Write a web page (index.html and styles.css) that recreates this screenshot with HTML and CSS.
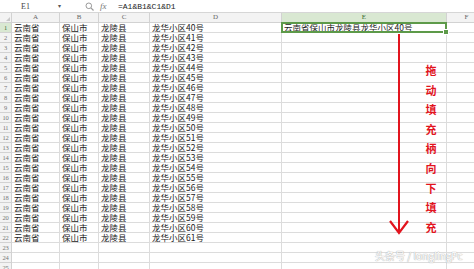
FILE: index.html
```html
<!DOCTYPE html>
<html lang="zh">
<head>
<meta charset="utf-8">
<link rel="stylesheet" href="styles.css">
</head>
<body>
<div class="sheet">
  <div class="formula-bar">
    <div class="name-box"><span>E1</span><span class="drop">▾</span></div>
    <div class="tools">
      <svg class="mag" width="9" height="9" viewBox="0 0 9 9"><circle cx="3.8" cy="3.8" r="2.8" fill="none" stroke="#9a9a9a" stroke-width="1"/><line x1="5.9" y1="5.9" x2="8.5" y2="8.5" stroke="#9a9a9a" stroke-width="1.2"/></svg>
      <span class="fx">fx</span>
    </div>
    <div class="formula">=A1&amp;B1&amp;C1&amp;D1</div>
  </div>
  <div class="grid">
    <div class="row head"><div class="c rh corner"><span class="tri"></span></div><div class="c">A</div><div class="c">B</div><div class="c">C</div><div class="c">D</div><div class="c sel-col">E</div><div class="c">F</div></div>
    <div class="row"><div class="c rh sel-row">1</div><div class="c">云南省</div><div class="c">保山市</div><div class="c">龙陵县</div><div class="c">龙华小区40号</div><div class="c active">云南省保山市龙陵县龙华小区40号<span class="handle"></span></div><div class="c"></div></div>
    <div class="row"><div class="c rh">2</div><div class="c">云南省</div><div class="c">保山市</div><div class="c">龙陵县</div><div class="c">龙华小区41号</div><div class="c"></div><div class="c"></div></div>
    <div class="row"><div class="c rh">3</div><div class="c">云南省</div><div class="c">保山市</div><div class="c">龙陵县</div><div class="c">龙华小区42号</div><div class="c"></div><div class="c"></div></div>
    <div class="row"><div class="c rh">4</div><div class="c">云南省</div><div class="c">保山市</div><div class="c">龙陵县</div><div class="c">龙华小区43号</div><div class="c"></div><div class="c"></div></div>
    <div class="row"><div class="c rh">5</div><div class="c">云南省</div><div class="c">保山市</div><div class="c">龙陵县</div><div class="c">龙华小区44号</div><div class="c"></div><div class="c"></div></div>
    <div class="row"><div class="c rh">6</div><div class="c">云南省</div><div class="c">保山市</div><div class="c">龙陵县</div><div class="c">龙华小区45号</div><div class="c"></div><div class="c"></div></div>
    <div class="row"><div class="c rh">7</div><div class="c">云南省</div><div class="c">保山市</div><div class="c">龙陵县</div><div class="c">龙华小区46号</div><div class="c"></div><div class="c"></div></div>
    <div class="row"><div class="c rh">8</div><div class="c">云南省</div><div class="c">保山市</div><div class="c">龙陵县</div><div class="c">龙华小区47号</div><div class="c"></div><div class="c"></div></div>
    <div class="row"><div class="c rh">9</div><div class="c">云南省</div><div class="c">保山市</div><div class="c">龙陵县</div><div class="c">龙华小区48号</div><div class="c"></div><div class="c"></div></div>
    <div class="row"><div class="c rh">10</div><div class="c">云南省</div><div class="c">保山市</div><div class="c">龙陵县</div><div class="c">龙华小区49号</div><div class="c"></div><div class="c"></div></div>
    <div class="row"><div class="c rh">11</div><div class="c">云南省</div><div class="c">保山市</div><div class="c">龙陵县</div><div class="c">龙华小区50号</div><div class="c"></div><div class="c"></div></div>
    <div class="row"><div class="c rh">12</div><div class="c">云南省</div><div class="c">保山市</div><div class="c">龙陵县</div><div class="c">龙华小区51号</div><div class="c"></div><div class="c"></div></div>
    <div class="row"><div class="c rh">13</div><div class="c">云南省</div><div class="c">保山市</div><div class="c">龙陵县</div><div class="c">龙华小区52号</div><div class="c"></div><div class="c"></div></div>
    <div class="row"><div class="c rh">14</div><div class="c">云南省</div><div class="c">保山市</div><div class="c">龙陵县</div><div class="c">龙华小区53号</div><div class="c"></div><div class="c"></div></div>
    <div class="row"><div class="c rh">15</div><div class="c">云南省</div><div class="c">保山市</div><div class="c">龙陵县</div><div class="c">龙华小区54号</div><div class="c"></div><div class="c"></div></div>
    <div class="row"><div class="c rh">16</div><div class="c">云南省</div><div class="c">保山市</div><div class="c">龙陵县</div><div class="c">龙华小区55号</div><div class="c"></div><div class="c"></div></div>
    <div class="row"><div class="c rh">17</div><div class="c">云南省</div><div class="c">保山市</div><div class="c">龙陵县</div><div class="c">龙华小区56号</div><div class="c"></div><div class="c"></div></div>
    <div class="row"><div class="c rh">18</div><div class="c">云南省</div><div class="c">保山市</div><div class="c">龙陵县</div><div class="c">龙华小区57号</div><div class="c"></div><div class="c"></div></div>
    <div class="row"><div class="c rh">19</div><div class="c">云南省</div><div class="c">保山市</div><div class="c">龙陵县</div><div class="c">龙华小区58号</div><div class="c"></div><div class="c"></div></div>
    <div class="row"><div class="c rh">20</div><div class="c">云南省</div><div class="c">保山市</div><div class="c">龙陵县</div><div class="c">龙华小区59号</div><div class="c"></div><div class="c"></div></div>
    <div class="row"><div class="c rh">21</div><div class="c">云南省</div><div class="c">保山市</div><div class="c">龙陵县</div><div class="c">龙华小区60号</div><div class="c"></div><div class="c"></div></div>
    <div class="row"><div class="c rh">22</div><div class="c">云南省</div><div class="c">保山市</div><div class="c">龙陵县</div><div class="c">龙华小区61号</div><div class="c"></div><div class="c"></div></div>
    <div class="row"><div class="c rh">23</div><div class="c"></div><div class="c"></div><div class="c"></div><div class="c"></div><div class="c"></div><div class="c"></div></div>
    <div class="row"><div class="c rh">24</div><div class="c"></div><div class="c"></div><div class="c"></div><div class="c"></div><div class="c"></div><div class="c"></div></div>
    <div class="row"><div class="c rh">25</div><div class="c"></div><div class="c"></div><div class="c"></div><div class="c"></div><div class="c"></div><div class="c"></div></div>
  </div>
  <svg class="arrow" width="24" height="204" viewBox="0 0 24 204"><line x1="11" y1="0" x2="11" y2="199" stroke="#e2141e" stroke-width="2"/><polyline points="2,187 11,199 20,187" fill="none" stroke="#e2141e" stroke-width="2.2"/></svg>
  <div class="note">拖动填充柄向下填充</div>
  <div class="watermark">头条号 / longlingPc</div>
</div>
</body>
</html>
```
FILE: styles.css
```css
html, body {
  margin: 0;
  padding: 0;
  background: #fff;
}
.sheet {
  position: relative;
  width: 474px;
  height: 269px;
  overflow: hidden;
  font-family: "Noto Sans CJK SC", "Noto Sans", sans-serif;
  color: #222;
}
.formula-bar {
  display: flex;
  align-items: center;
  height: 13px;
  box-sizing: border-box;
  border-bottom: 1px solid #d6d6d6;
  font-size: 8px;
}
.name-box {
  width: 66px;
  box-sizing: border-box;
  display: flex;
  justify-content: space-between;
  padding: 0 5px 0 21px;
  font-family: "Liberation Serif", serif;
  color: #444;
}
.drop {
  font-size: 6px;
  color: #555;
}
.tools {
  width: 52px;
  box-sizing: border-box;
  display: flex;
  align-items: center;
  gap: 6px;
  padding-left: 19px;
}
.fx {
  font-family: "Liberation Serif", serif;
  font-style: italic;
  font-size: 9px;
  color: #777;
}
.formula {
  font-family: "Liberation Mono", monospace;
  font-size: 8px;
  color: #222;
}
.grid {
  display: flex;
  flex-direction: column;
}
.row {
  display: grid;
  grid-template-columns: 12px 48px 39px 51px 132px 165px 40px;
  height: 10px;
}
.c {
  position: relative;
  box-sizing: border-box;
  border-right: 1px solid #dcdcdc;
  border-bottom: 1px solid #dcdcdc;
  font-size: 8.5px;
  line-height: 9px;
  padding-left: 2px;
  white-space: nowrap;
}
.head .c {
  background: #f3f3f3;
  border-color: #d2d2d2;
  color: #666;
  font-family: "Liberation Serif", serif;
  font-size: 7px;
  text-align: center;
  padding-left: 0;
}
.head .sel-col {
  background: #d9e8d2;
  border-bottom: 1px solid #79a86a;
  color: #3c6b30;
}
.corner .tri {
  position: absolute;
  right: 1px;
  bottom: 1px;
  width: 0;
  height: 0;
  border-left: 4px solid transparent;
  border-bottom: 4px solid #c8c8c8;
}
.rh {
  background: #f3f3f3;
  border-color: #d2d2d2;
  color: #777;
  font-family: "Liberation Serif", serif;
  font-size: 6.5px;
  text-align: center;
  padding-left: 0;
  letter-spacing: -0.3px;
}
.rh.sel-row {
  background: #d9e8d2;
  color: #3c6b30;
}
.active {
  font-size: 8.5px;
}
.active::after {
  content: "";
  position: absolute;
  left: -1px;
  top: -1px;
  right: -1px;
  bottom: -1px;
  border: 2px solid #5d9a49;
}
.handle {
  position: absolute;
  right: -3px;
  bottom: -3px;
  width: 4px;
  height: 4px;
  background: #5d9a49;
  border: 1px solid #fff;
  z-index: 2;
}
.arrow {
  position: absolute;
  left: 388px;
  top: 34px;
}
.note {
  position: absolute;
  left: 425px;
  top: 61px;
  width: 12px;
  font-size: 11px;
  line-height: 19.6px;
  font-weight: bold;
  color: #e2141e;
  text-align: center;
}
.watermark {
  position: absolute;
  left: 375px;
  top: 250px;
  font-size: 10px;
  line-height: 12px;
  color: #fff;
  white-space: nowrap;
  text-shadow: 0 0 1px #a8a8a8, 0 0 1px #a8a8a8;
}
```
